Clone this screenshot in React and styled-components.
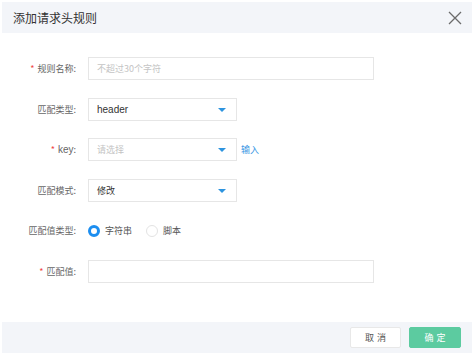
import React from "react";
import styled, { createGlobalStyle } from "styled-components";

const Global = createGlobalStyle`
  html, body { margin: 0; padding: 0; background: #fff; }
  body { font-family: "Noto Sans CJK SC", "Noto Sans", sans-serif; }
  * { box-sizing: border-box; }
`;

const Dialog = styled.div`
  width: 474px;
  height: 357px;
  padding: 2px;
  display: flex;
  flex-direction: column;
  background: #fff;
`;

const Header = styled.div`
  height: 31px;
  background: #f3f5f9;
  display: flex;
  align-items: center;
  justify-content: space-between;
  padding: 0 10px 0 11px;
`;

const Title = styled.div`
  font-size: 12px;
  color: #333;
  line-height: 1;
`;

const Close = styled.button`
  border: none;
  background: none;
  padding: 0;
  width: 14px;
  height: 14px;
  display: flex;
  cursor: pointer;
`;

const Form = styled.div`
  flex: 1;
  padding-top: 24px;
  display: flex;
  flex-direction: column;
  gap: 17.5px;
`;

const Row = styled.div`
  display: grid;
  grid-template-columns: 86px auto;
  align-items: center;
  height: 23px;
`;

const Label = styled.div`
  text-align: right;
  padding-right: 12px;
  font-size: 9px;
  color: #666;
  white-space: nowrap;
`;

const Star = styled.span`
  color: #f04646;
  margin-right: 3px;
`;

const Field = styled.div`
  display: flex;
  align-items: center;
  gap: 4px;
`;

const Input = styled.div`
  width: ${(p) => p.$w}px;
  height: 23px;
  border: 1px solid #e6e6e6;
  background: #fff;
  display: flex;
  align-items: center;
  justify-content: space-between;
  padding: 0 9px 0 8px;
  font-size: 9px;
  color: ${(p) => (p.$placeholder ? "#c4c4c4" : "#333")};
`;

const Value = styled.span`
  font-family: ${(p) => (p.$latin ? '"Liberation Sans", Arial, sans-serif' : "inherit")};
  font-size: ${(p) => (p.$latin ? "10px" : "9px")};
`;

const Caret = styled.span`
  width: 0;
  height: 0;
  border-left: 4px solid transparent;
  border-right: 4px solid transparent;
  border-top: 4px solid #2d94df;
  margin-right: 1px;
  margin-top: 1px;
`;

const Link = styled.a`
  font-size: 9px;
  color: #3a97e4;
  text-decoration: none;
`;

const RadioGroup = styled.div`
  display: flex;
  align-items: center;
  gap: 14px;
`;

const RadioItem = styled.label`
  display: flex;
  align-items: center;
  gap: 5px;
  font-size: 9px;
  color: #555;
`;

const Dot = styled.span`
  width: 12px;
  height: 12px;
  border-radius: 50%;
  border: ${(p) => (p.$on ? "3.5px solid #1c8ef0" : "1px solid #e3e3e3")};
  background: #fff;
`;

const Footer = styled.div`
  height: 31px;
  background: #f3f5f9;
  display: flex;
  align-items: center;
  justify-content: flex-end;
  gap: 8px;
  padding-right: 11px;
  margin-bottom: 2px;
`;

const Button = styled.button`
  width: ${(p) => (p.$primary ? 52 : 51)}px;
  height: 21px;
  border: 1px solid ${(p) => (p.$primary ? "#5ccba0" : "#e8e8e8")};
  background: ${(p) => (p.$primary ? "#5ccba0" : "#fff")};
  color: ${(p) => (p.$primary ? "#fff" : "#555")};
  border-radius: 2px;
  font-family: inherit;
  font-size: 9px;
  letter-spacing: 3px;
  padding: 0 0 0 3px;
  cursor: pointer;
`;

export default function App() {
  return (
    <>
      <Global />
      <Dialog>
        <Header>
          <Title>添加请求头规则</Title>
          <Close aria-label="close">
            <svg width="14" height="14" viewBox="0 0 14 14">
              <path d="M1 1 L13 13 M13 1 L1 13" stroke="#6b6b6b" strokeWidth="1.3" fill="none" />
            </svg>
          </Close>
        </Header>
        <Form>
          <Row>
            <Label><Star>*</Star>规则名称:</Label>
            <Field>
              <Input $w={286} $placeholder>
                <Value>不超过30个字符</Value>
              </Input>
            </Field>
          </Row>
          <Row>
            <Label>匹配类型:</Label>
            <Field>
              <Input $w={149}>
                <Value $latin>header</Value>
                <Caret />
              </Input>
            </Field>
          </Row>
          <Row>
            <Label><Star>*</Star><Value $latin>key</Value>:</Label>
            <Field>
              <Input $w={149} $placeholder>
                <Value>请选择</Value>
                <Caret />
              </Input>
              <Link href="#">输入</Link>
            </Field>
          </Row>
          <Row>
            <Label>匹配模式:</Label>
            <Field>
              <Input $w={149}>
                <Value>修改</Value>
                <Caret />
              </Input>
            </Field>
          </Row>
          <Row>
            <Label>匹配值类型:</Label>
            <RadioGroup>
              <RadioItem><Dot $on />字符串</RadioItem>
              <RadioItem><Dot />脚本</RadioItem>
            </RadioGroup>
          </Row>
          <Row>
            <Label><Star>*</Star>匹配值:</Label>
            <Field>
              <Input $w={286} />
            </Field>
          </Row>
        </Form>
        <Footer>
          <Button>取消</Button>
          <Button $primary>确定</Button>
        </Footer>
      </Dialog>
    </>
  );
}
